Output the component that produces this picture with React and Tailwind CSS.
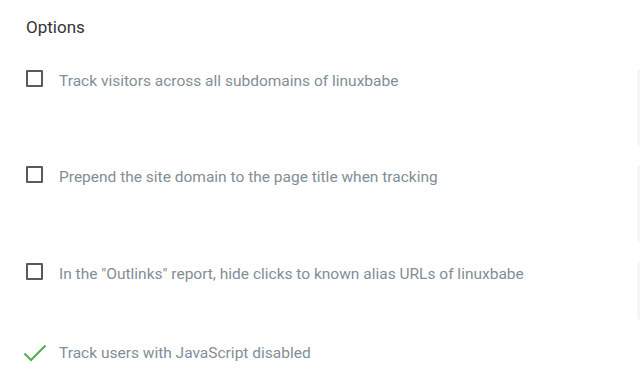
const options = [
  { label: "Track visitors across all subdomains of linuxbabe", checked: false, help: "h-[77px]", gap: "mb-[19px]" },
  { label: "Prepend the site domain to the page title when tracking", checked: false, help: "h-[77px]", gap: "mb-[20px]" },
  { label: 'In the "Outlinks" report, hide clicks to known alias URLs of linuxbabe', checked: false, help: "h-[58px]", gap: "mb-[23px]" },
];

const Box = () => (
  <div className="w-[17px] h-[17px] border-2 border-[#5a5a5a] rounded-[1px] shrink-0" />
);

const Check = () => (
  <svg width="24" height="18" viewBox="0 0 24 18" className="shrink-0 -ml-[3px] mr-[-4px]">
    <path d="M1.5 9.5 L8 16 L22.5 1.5" fill="none" stroke="#4caf50" strokeWidth="2" />
  </svg>
);

export default function App() {
  return (
    <div className="w-[640px] h-[381px] overflow-hidden bg-white font-['Roboto',sans-serif]">
      <div className="pl-[26px] pt-[16px]">
        <h3 className="text-[17px] leading-[22px] text-[#333] mb-[31px]">Options</h3>

        {options.map((o) => (
          <div key={o.label} className={`flex ${o.gap}`}>
            <div className="w-[611px] shrink-0 flex items-start pt-[1px]">
              <Box />
              <span className="ml-[16px] text-[15.5px] leading-[20px] text-[#838d98] mt-[1px]">{o.label}</span>
            </div>
            <div className={`w-[200px] shrink-0 ${o.help} bg-[#f5f5f5] rounded-l-[4px]`} />
          </div>
        ))}

        <div className="flex items-center">
          <Check />
          <span className="ml-[16px] text-[15.5px] leading-[20px] text-[#838d98]">Track users with JavaScript disabled</span>
        </div>
      </div>
    </div>
  );
}
